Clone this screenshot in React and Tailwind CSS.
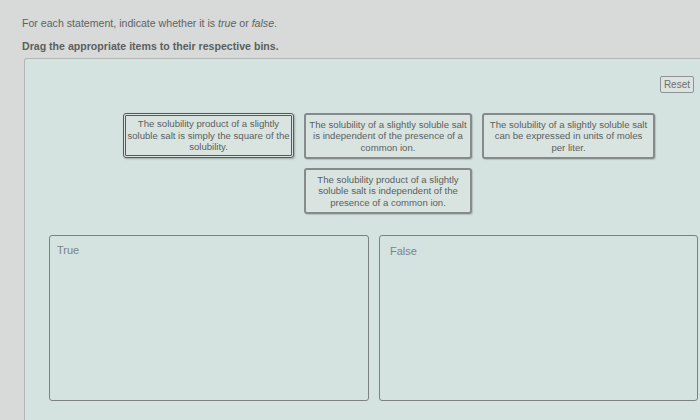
import React from "react";

function Card({ lines, selected, className = "" }) {
  return (
    <div
      className={
        "flex items-center justify-center text-center rounded-[3px] bg-[#d9e4e1] text-[#5a5f60] text-[9.6px] leading-[11.5px] whitespace-nowrap " +
        (selected
          ? "border-[3px] border-double border-[#555b5c] shadow-[1px_1px_2px_rgba(0,0,0,0.25)] "
          : "border-2 border-[#858b8b] shadow-[1px_1px_1px_rgba(0,0,0,0.15)] ") +
        className
      }
    >
      <span>
        {lines.map((l, i) => (
          <React.Fragment key={i}>
            {l}
            {i < lines.length - 1 && <br />}
          </React.Fragment>
        ))}
      </span>
    </div>
  );
}

export default function App() {
  return (
    <div
      className="w-[700px] h-[420px] overflow-hidden bg-[#d7dad8] text-[#555]"
      style={{ fontFamily: '"Liberation Sans", Arial, sans-serif' }}
    >
      <div className="pl-[22px] pt-[17px]">
        <p className="text-[10.6px] leading-[13px] text-[#5e6263]">
          For each statement, indicate whether it is <i>true</i> or <i>false</i>.
        </p>
        <p className="mt-[10px] text-[10.6px] leading-[13px] font-bold text-[#5b5f60]">
          Drag the appropriate items to their respective bins.
        </p>
      </div>
      <div className="ml-[24px] mt-[5px] h-[400px] border-l border-t border-[#b3b8b6] rounded-tl-[3px] bg-[#d4e3e0]">
        <div className="flex justify-end pr-[6px] pt-[17px]">
          <div className="border border-[#8d9392] rounded-[2px] px-[3px] h-[17px] flex items-center text-[10px] text-[#6a6f70] bg-[#dde3e1]">
            Reset
          </div>
        </div>
        <div className="grid grid-cols-[171px_168px_173px] gap-x-[10px] gap-y-[9px] pl-[98px] mt-[20px]">
          <Card
            selected
            className="h-[45px]"
            lines={[
              "The solubility product of a slightly",
              "soluble salt is simply the square of the",
              "solubility.",
            ]}
          />
          <Card
            className="h-[46px]"
            lines={[
              "The solubility of a slightly soluble salt",
              "is independent of the presence of a",
              "common ion.",
            ]}
          />
          <Card
            className="h-[46px]"
            lines={[
              "The solubility of a slightly soluble salt",
              "can be expressed in units of moles",
              "per liter.",
            ]}
          />
          <div />
          <Card
            className="h-[46px]"
            lines={[
              "The solubility product of a slightly",
              "soluble salt is independent of the",
              "presence of a common ion.",
            ]}
          />
          <div />
        </div>
        <div className="flex gap-[10px] pl-[24px] mt-[21px]">
          <div className="w-[320px] h-[166px] border border-[#7b8281] rounded-[3px] px-[7px] pt-[1px]">
            <span className="text-[11px] text-[#7c8283]">True</span>
          </div>
          <div className="w-[319px] h-[166px] border border-[#7b8281] rounded-[3px] px-[10px] pt-[2px]">
            <span className="text-[11px] text-[#7c8283]">False</span>
          </div>
        </div>
      </div>
    </div>
  );
}
